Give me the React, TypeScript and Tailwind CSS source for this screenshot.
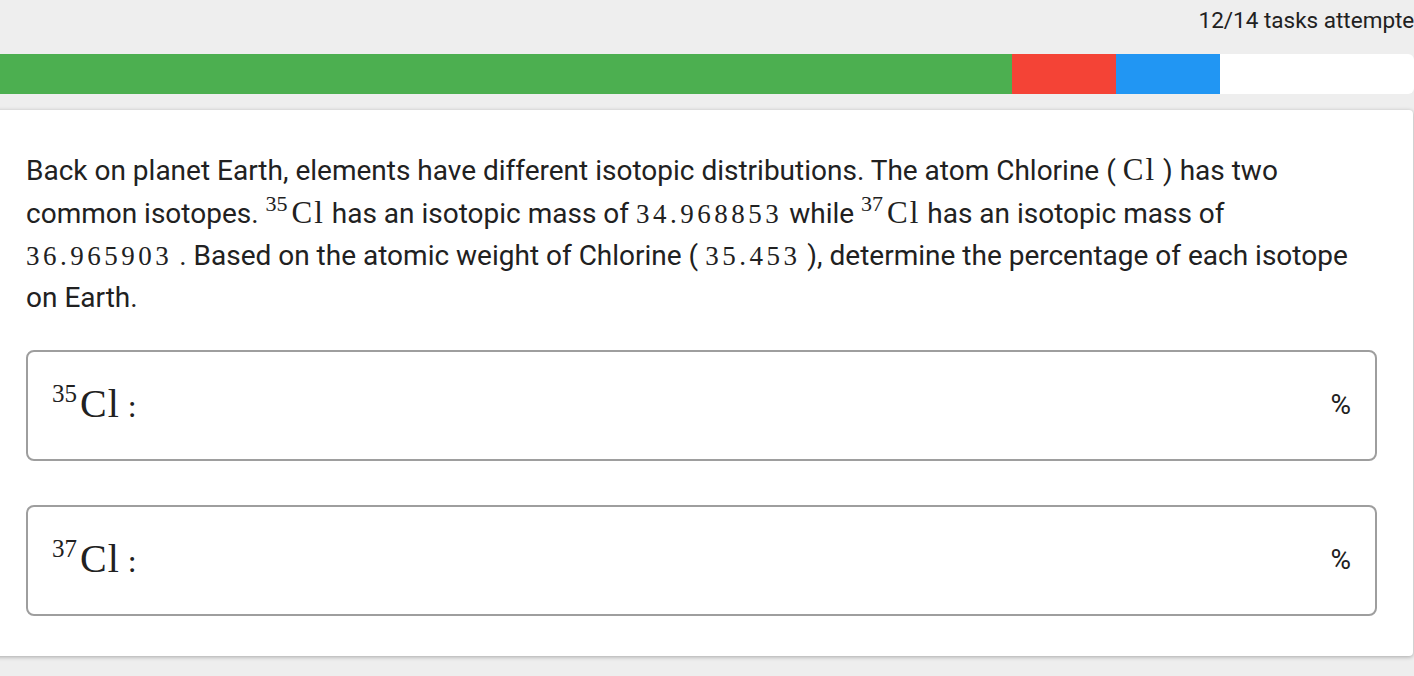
import React from 'react';

const math = "font-['Liberation_Serif',serif] text-[27px] tracking-[3.5px]";

const Iso: React.FC<{ mass: string; big?: boolean }> = ({ mass, big }) => (
  <span className="font-['Liberation_Serif',serif]">
    <sup className={`${big ? 'mr-[3px] text-[25px] -top-[15px]' : 'mr-[4px] text-[22px] -top-[12px]'} relative align-baseline`}>{mass}</sup>
    <span className={big ? 'text-[40px] tracking-[1px]' : 'text-[31px] tracking-[2px]'}>Cl</span>
  </span>
);

const AnswerBox: React.FC<{ mass: string }> = ({ mass }) => (
  <div className="flex h-[111px] items-center justify-between rounded-[8px] border-2 border-[#9e9e9e] bg-white pl-6 pr-6">
    <div className="flex items-baseline pb-[4px] text-[#212121]">
      <Iso mass={mass} big />
      <span className="ml-[8px] font-['Liberation_Serif',serif] text-[32px]">:</span>
    </div>
    <span className="pb-[2px] text-[28px] text-[#212121]">%</span>
  </div>
);

export default function App() {
  return (
    <div className="h-[676px] w-[1414px] overflow-hidden bg-[#eeeeee] font-['Roboto',sans-serif] text-[#212121]">
      {/* Header */}
      <div className="flex h-[54px] justify-end pt-[5px]">
        <span className="mr-[-13px] whitespace-nowrap text-[22.5px] leading-[30px]">12/14 tasks attempted</span>
      </div>

      {/* Progress bar */}
      <div className="flex h-10">
        <div className="w-[1012px] bg-[#4caf50]" />
        <div className="w-[104px] bg-[#f44336]" />
        <div className="w-[104px] bg-[#2196f3]" />
        <div className="flex-1 rounded-r-[6px] bg-white" />
      </div>

      {/* Task card */}
      <div className="ml-[-8px] mt-4 h-[546px] w-[1421px] rounded-[4px] bg-white pl-[34px] pt-[39px] shadow-[0_1px_4px_rgba(0,0,0,0.3)]">
        <div className="w-[1351px]">
          <p className="w-[1340px] text-[28px] leading-[42px]">
            Back on planet Earth, elements have different isotopic distributions. The atom Chlorine ({' '}
            <span className="font-['Liberation_Serif',serif] text-[31px] tracking-[2px]">Cl</span> ) has two common
            isotopes. <Iso mass="35" /> has an isotopic mass of <span className={math}>34.968853</span> while{' '}
            <Iso mass="37" /> has an isotopic mass of <span className={math}>36.965903</span> . Based on the atomic
            weight of Chlorine ( <span className={math}>35.453</span> ), determine the percentage of each isotope on
            Earth.
          </p>

          <div className="mt-[31px] flex flex-col gap-[44px]">
            <AnswerBox mass="35" />
            <AnswerBox mass="37" />
          </div>
        </div>
      </div>
    </div>
  );
}
